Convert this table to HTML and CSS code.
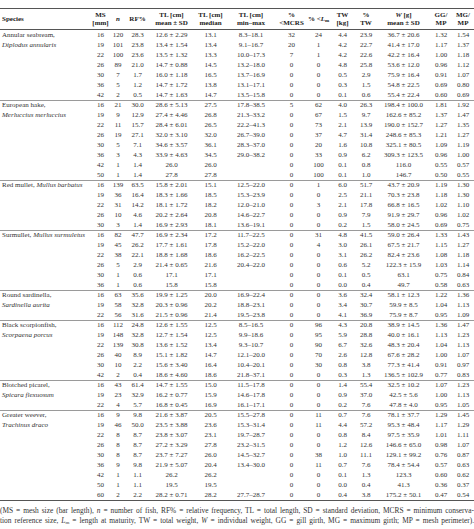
FILE: index.html
```html
<!DOCTYPE html>
<html>
<head>
<meta charset="utf-8">
<link rel="stylesheet" href="styles.css">
</head>
<body>
<div class="page">
<table class="data">
<thead>
<tr>
<th class="sp"><span>Species</span></th>
<th><span>MS<br>[mm]</span></th>
<th><span><i>n</i></span></th>
<th><span>RF%</span></th>
<th><span>TL [cm]<br>mean ± SD</span></th>
<th><span>TL [cm]<br>median</span></th>
<th><span>TL [cm]<br>min–max</span></th>
<th><span>%<br>&lt;MCRS</span></th>
<th><span>% &lt;<i>L</i><sub>m</sub></span></th>
<th><span>TW<br>[kg]</span></th>
<th><span>%<br>TW</span></th>
<th><span><i>W</i> [g]<br>mean ± SD</span></th>
<th><span>GG/<br>MP</span></th>
<th><span>MG/<br>MP</span></th>
</tr>
</thead>
<tbody>
<tr><td class="sp">Annular seabream,</td><td>16</td><td>120</td><td>28.3</td><td>12.6 ± 2.29</td><td>13.1</td><td>8.3–18.1</td><td>32</td><td>24</td><td>4.4</td><td>23.9</td><td>36.7 ± 20.6</td><td>1.32</td><td>1.54</td></tr>
<tr><td class="sp"><i>Diplodus annularis</i></td><td>19</td><td>101</td><td>23.8</td><td>13.4 ± 1.54</td><td>13.4</td><td>9.1–16.7</td><td>20</td><td>1</td><td>4.2</td><td>22.7</td><td>41.4 ± 17.0</td><td>1.17</td><td>1.37</td></tr>
<tr><td class="sp"></td><td>22</td><td>100</td><td>23.6</td><td>13.5 ± 1.32</td><td>13.3</td><td>10.0–17.3</td><td>7</td><td>1</td><td>4.2</td><td>22.6</td><td>42.2 ± 16.4</td><td>1.00</td><td>1.18</td></tr>
<tr><td class="sp"></td><td>26</td><td>89</td><td>21.0</td><td>14.7 ± 0.88</td><td>14.5</td><td>13.2–18.0</td><td>0</td><td>0</td><td>4.8</td><td>25.8</td><td>53.6 ± 12.0</td><td>0.96</td><td>1.12</td></tr>
<tr><td class="sp"></td><td>30</td><td>7</td><td>1.7</td><td>16.0 ± 1.18</td><td>16.5</td><td>13.7–16.9</td><td>0</td><td>0</td><td>0.5</td><td>2.9</td><td>75.9 ± 16.4</td><td>0.91</td><td>1.07</td></tr>
<tr><td class="sp"></td><td>36</td><td>5</td><td>1.2</td><td>14.7 ± 1.72</td><td>13.8</td><td>13.1–17.1</td><td>0</td><td>0</td><td>0.3</td><td>1.5</td><td>54.8 ± 22.5</td><td>0.69</td><td>0.80</td></tr>
<tr><td class="sp"></td><td>42</td><td>2</td><td>0.5</td><td>14.7 ± 1.63</td><td>14.7</td><td>13.5–15.8</td><td>0</td><td>0</td><td>0.1</td><td>0.6</td><td>55.4 ± 22.4</td><td>0.60</td><td>0.69</td></tr>

<tr class="g"><td class="sp">European hake,</td><td>16</td><td>21</td><td>30.0</td><td>28.6 ± 5.13</td><td>27.5</td><td>17.8–38.5</td><td>5</td><td>62</td><td>4.0</td><td>26.3</td><td>198.4 ± 100.0</td><td>1.81</td><td>1.92</td></tr>
<tr><td class="sp"><i>Merluccius merluccius</i></td><td>19</td><td>9</td><td>12.9</td><td>27.4 ± 4.46</td><td>26.8</td><td>21.3–33.2</td><td>0</td><td>67</td><td>1.5</td><td>9.7</td><td>162.6 ± 85.2</td><td>1.37</td><td>1.47</td></tr>
<tr><td class="sp"></td><td>22</td><td>11</td><td>15.7</td><td>28.4 ± 6.01</td><td>26.5</td><td>22.2–41.3</td><td>0</td><td>73</td><td>2.1</td><td>13.9</td><td>190.0 ± 152.7</td><td>1.27</td><td>1.35</td></tr>
<tr><td class="sp"></td><td>26</td><td>19</td><td>27.1</td><td>32.0 ± 3.10</td><td>32.0</td><td>26.7–39.0</td><td>0</td><td>37</td><td>4.7</td><td>31.4</td><td>248.6 ± 85.3</td><td>1.21</td><td>1.27</td></tr>
<tr><td class="sp"></td><td>30</td><td>5</td><td>7.1</td><td>34.6 ± 3.57</td><td>36.1</td><td>28.3–37.0</td><td>0</td><td>20</td><td>1.6</td><td>10.8</td><td>325.1 ± 80.5</td><td>1.09</td><td>1.19</td></tr>
<tr><td class="sp"></td><td>36</td><td>3</td><td>4.3</td><td>33.9 ± 4.63</td><td>34.5</td><td>29.0–38.2</td><td>0</td><td>33</td><td>0.9</td><td>6.2</td><td>309.3 ± 123.5</td><td>0.96</td><td>1.00</td></tr>
<tr><td class="sp"></td><td>42</td><td>1</td><td>1.4</td><td>26.0</td><td>26.0</td><td></td><td>0</td><td>100</td><td>0.1</td><td>0.8</td><td>116.0</td><td>0.55</td><td>0.57</td></tr>
<tr><td class="sp"></td><td>50</td><td>1</td><td>1.4</td><td>27.8</td><td>27.8</td><td></td><td>0</td><td>100</td><td>0.1</td><td>1.0</td><td>146.7</td><td>0.50</td><td>0.55</td></tr>

<tr class="g"><td class="sp">Red mullet, <i>Mullus barbatus</i></td><td>16</td><td>139</td><td>63.5</td><td>15.8 ± 2.01</td><td>15.1</td><td>12.5–22.0</td><td>0</td><td>1</td><td>6.0</td><td>51.7</td><td>43.7 ± 20.9</td><td>1.19</td><td>1.30</td></tr>
<tr><td class="sp"></td><td>19</td><td>36</td><td>16.4</td><td>18.3 ± 1.66</td><td>18.5</td><td>15.3–23.9</td><td>0</td><td>0</td><td>2.5</td><td>21.1</td><td>70.3 ± 23.8</td><td>1.18</td><td>1.30</td></tr>
<tr><td class="sp"></td><td>22</td><td>31</td><td>14.2</td><td>18.1 ± 1.72</td><td>18.2</td><td>12.0–21.0</td><td>0</td><td>3</td><td>2.1</td><td>17.8</td><td>66.8 ± 16.5</td><td>1.02</td><td>1.10</td></tr>
<tr><td class="sp"></td><td>26</td><td>10</td><td>4.6</td><td>20.2 ± 2.64</td><td>20.8</td><td>14.6–22.7</td><td>0</td><td>0</td><td>0.9</td><td>7.9</td><td>91.9 ± 29.7</td><td>0.96</td><td>1.02</td></tr>
<tr><td class="sp"></td><td>30</td><td>3</td><td>1.4</td><td>16.9 ± 2.93</td><td>18.1</td><td>13.6–19.1</td><td>0</td><td>0</td><td>0.2</td><td>1.5</td><td>58.0 ± 24.5</td><td>0.69</td><td>0.75</td></tr>

<tr class="g"><td class="sp">Surmullet, <i>Mullus surmuletus</i></td><td>16</td><td>82</td><td>47.7</td><td>16.9 ± 2.34</td><td>17.2</td><td>11.7–22.5</td><td>0</td><td>31</td><td>4.8</td><td>41.5</td><td>59.0 ± 26.4</td><td>1.33</td><td>1.43</td></tr>
<tr><td class="sp"></td><td>19</td><td>45</td><td>26.2</td><td>17.7 ± 1.61</td><td>17.8</td><td>15.2–22.0</td><td>0</td><td>4</td><td>3.0</td><td>26.1</td><td>67.5 ± 21.7</td><td>1.15</td><td>1.27</td></tr>
<tr><td class="sp"></td><td>22</td><td>38</td><td>22.1</td><td>18.8 ± 1.68</td><td>18.6</td><td>16.2–22.5</td><td>0</td><td>0</td><td>3.1</td><td>26.2</td><td>82.4 ± 23.6</td><td>1.08</td><td>1.18</td></tr>
<tr><td class="sp"></td><td>26</td><td>5</td><td>2.9</td><td>21.4 ± 0.65</td><td>21.6</td><td>20.4–22.0</td><td>0</td><td>0</td><td>0.6</td><td>5.2</td><td>122.3 ± 15.9</td><td>1.03</td><td>1.14</td></tr>
<tr><td class="sp"></td><td>30</td><td>1</td><td>0.6</td><td>17.1</td><td>17.1</td><td></td><td>0</td><td>0</td><td>0.1</td><td>0.5</td><td>63.1</td><td>0.75</td><td>0.84</td></tr>
<tr><td class="sp"></td><td>36</td><td>1</td><td>0.6</td><td>15.8</td><td>15.8</td><td></td><td>0</td><td>0</td><td>0.0</td><td>0.4</td><td>49.7</td><td>0.58</td><td>0.63</td></tr>

<tr class="g"><td class="sp">Round sardinella,</td><td>16</td><td>63</td><td>35.6</td><td>19.9 ± 1.25</td><td>20.0</td><td>16.9–22.4</td><td>0</td><td>0</td><td>3.6</td><td>32.4</td><td>58.1 ± 12.3</td><td>1.22</td><td>1.36</td></tr>
<tr><td class="sp"><i>Sardinella aurita</i></td><td>19</td><td>58</td><td>32.8</td><td>20.3 ± 0.96</td><td>20.2</td><td>18.8–23.1</td><td>0</td><td>0</td><td>3.4</td><td>30.7</td><td>59.9 ± 8.5</td><td>1.04</td><td>1.13</td></tr>
<tr><td class="sp"></td><td>22</td><td>56</td><td>31.6</td><td>21.5 ± 0.96</td><td>21.4</td><td>19.5–23.8</td><td>0</td><td>0</td><td>4.1</td><td>36.9</td><td>75.9 ± 8.7</td><td>0.95</td><td>1.09</td></tr>

<tr class="g"><td class="sp">Black scorpionfish,</td><td>16</td><td>112</td><td>24.8</td><td>12.6 ± 1.55</td><td>12.5</td><td>8.5–16.5</td><td>0</td><td>96</td><td>4.3</td><td>20.8</td><td>38.9 ± 14.5</td><td>1.36</td><td>1.47</td></tr>
<tr><td class="sp"><i>Scorpaena porcus</i></td><td>19</td><td>148</td><td>32.8</td><td>12.7 ± 1.54</td><td>12.5</td><td>9.9–18.6</td><td>0</td><td>95</td><td>5.9</td><td>28.8</td><td>40.0 ± 16.1</td><td>1.13</td><td>1.23</td></tr>
<tr><td class="sp"></td><td>22</td><td>139</td><td>30.8</td><td>13.6 ± 1.52</td><td>13.4</td><td>9.3–10.7</td><td>0</td><td>90</td><td>6.7</td><td>32.6</td><td>48.3 ± 20.4</td><td>1.04</td><td>1.13</td></tr>
<tr><td class="sp"></td><td>26</td><td>40</td><td>8.9</td><td>15.1 ± 1.82</td><td>14.7</td><td>12.1–20.0</td><td>0</td><td>70</td><td>2.6</td><td>12.8</td><td>67.6 ± 28.2</td><td>1.00</td><td>1.07</td></tr>
<tr><td class="sp"></td><td>30</td><td>10</td><td>2.2</td><td>15.6 ± 3.40</td><td>16.4</td><td>10.4–20.1</td><td>0</td><td>30</td><td>0.8</td><td>3.8</td><td>77.3 ± 41.4</td><td>0.91</td><td>0.97</td></tr>
<tr><td class="sp"></td><td>42</td><td>2</td><td>0.4</td><td>18.6 ± 4.60</td><td>18.6</td><td>21.8–37.1</td><td>0</td><td>0</td><td>0.3</td><td>1.3</td><td>136.5 ± 102.9</td><td>0.77</td><td>0.83</td></tr>

<tr class="g"><td class="sp">Blotched picarel,</td><td>16</td><td>43</td><td>61.4</td><td>14.7 ± 1.55</td><td>15.0</td><td>11.5–17.8</td><td>0</td><td>0</td><td>1.4</td><td>55.4</td><td>32.5 ± 10.2</td><td>1.07</td><td>1.23</td></tr>
<tr><td class="sp"><i>Spicara flexuosum</i></td><td>19</td><td>23</td><td>32.9</td><td>16.2 ± 0.77</td><td>15.9</td><td>14.6–17.8</td><td>0</td><td>0</td><td>0.9</td><td>37.0</td><td>42.5 ± 5.6</td><td>1.00</td><td>1.13</td></tr>
<tr><td class="sp"></td><td>22</td><td>4</td><td>5.7</td><td>16.8 ± 0.45</td><td>16.9</td><td>16.1–17.1</td><td>0</td><td>0</td><td>0.2</td><td>7.6</td><td>47.8 ± 4.0</td><td>0.95</td><td>1.05</td></tr>

<tr class="g"><td class="sp">Greater weever,</td><td>16</td><td>9</td><td>9.8</td><td>21.6 ± 3.87</td><td>20.5</td><td>15.5–27.8</td><td>0</td><td>11</td><td>0.7</td><td>7.6</td><td>78.1 ± 37.7</td><td>1.29</td><td>1.45</td></tr>
<tr><td class="sp"><i>Trachinus draco</i></td><td>19</td><td>46</td><td>50.0</td><td>23.5 ± 3.88</td><td>23.6</td><td>15.3–31.4</td><td>0</td><td>11</td><td>4.4</td><td>57.2</td><td>95.3 ± 48.4</td><td>1.17</td><td>1.29</td></tr>
<tr><td class="sp"></td><td>22</td><td>8</td><td>8.7</td><td>23.8 ± 3.07</td><td>23.1</td><td>19.7–28.7</td><td>0</td><td>0</td><td>0.8</td><td>8.4</td><td>97.5 ± 35.9</td><td>1.01</td><td>1.11</td></tr>
<tr><td class="sp"></td><td>26</td><td>8</td><td>8.7</td><td>27.2 ± 3.29</td><td>27.8</td><td>23.2–31.5</td><td>0</td><td>0</td><td>1.2</td><td>12.6</td><td>146.6 ± 65.0</td><td>0.98</td><td>1.07</td></tr>
<tr><td class="sp"></td><td>30</td><td>8</td><td>8.7</td><td>23.7 ± 7.27</td><td>26.0</td><td>14.5–32.7</td><td>0</td><td>38</td><td>1.0</td><td>11.1</td><td>129.1 ± 99.2</td><td>0.76</td><td>0.87</td></tr>
<tr><td class="sp"></td><td>36</td><td>9</td><td>9.8</td><td>21.9 ± 5.07</td><td>20.4</td><td>13.4–30.0</td><td>0</td><td>11</td><td>0.7</td><td>7.6</td><td>78.4 ± 54.4</td><td>0.57</td><td>0.63</td></tr>
<tr><td class="sp"></td><td>42</td><td>1</td><td>1.1</td><td>26.2</td><td>26.2</td><td></td><td>0</td><td>0</td><td>0.1</td><td>1.3</td><td>123.3</td><td>0.60</td><td>0.62</td></tr>
<tr><td class="sp"></td><td>50</td><td>1</td><td>1.1</td><td>19.5</td><td>19.5</td><td></td><td>0</td><td>0</td><td>0.0</td><td>0.4</td><td>41.3</td><td>0.36</td><td>0.37</td></tr>
<tr class="last"><td class="sp"></td><td>60</td><td>2</td><td>2.2</td><td>28.2 ± 0.71</td><td>28.2</td><td>27.7–28.7</td><td>0</td><td>0</td><td>0.4</td><td>3.8</td><td>175.2 ± 50.1</td><td>0.47</td><td>0.54</td></tr>
</tbody>
</table>
<div class="note">
<p>(MS = mesh size (bar length), <i>n</i> = number of fish, RF% = relative frequency, TL = total length, SD = standard deviation, MCRS = minimum conserva-</p>
<p>tion reference size, <i>L</i><sub>m</sub> = length at maturity, TW = total weight, <i>W</i> = individual weight, GG = gill girth, MG = maximum girth; MP = mesh perimeter).</p>
</div>
</div>
</body>
</html>
```

FILE: styles.css
```css
html, body {
  margin: 0;
  padding: 0;
  background: #fff;
}
body {
  width: 474px;
  height: 529px;
  overflow: hidden;
  font-family: "Liberation Serif", "Times New Roman", serif;
  color: #333;
}
.page {
  padding-top: 8px;
}
.data {
  display: block;
  width: 474px;
  border-collapse: separate;
  border-spacing: 0;
}
.data thead,
.data tbody {
  display: block;
}
.data tr {
  display: grid;
  grid-template-columns: 92px 17px 18px 21px 47px 31px 50px 31px 23px 25px 22px 53px 22px 22px;
}
.data thead tr {
  height: 20px;
  border-top: 1px solid #555;
  border-bottom: 1px solid #555;
}
.data th {
  display: flex;
  align-items: center;
  justify-content: center;
  font-weight: bold;
  font-size: 7px;
  line-height: 8.5px;
  padding: 0;
  color: #222;
  text-align: center;
  white-space: nowrap;
}
.data th span {
  display: block;
}
.data th.sp {
  justify-content: flex-start;
  padding-left: 2px;
}
.data sub,
.note sub {
  font-size: 5px;
  line-height: 0;
  vertical-align: -1px;
}
.data tbody tr {
  height: 10px;
}
.data td {
  display: block;
  font-size: 7px;
  line-height: 10px;
  height: 10px;
  padding: 0;
  text-align: center;
  white-space: nowrap;
}
.data td.sp {
  text-align: left;
  padding-left: 2px;
}
.data tr.g {
  box-shadow: inset 0 1px 0 #9a9a9a;
}
.data tr.last {
  border-bottom: 1px solid #555;
}
.note {
  margin-top: 5px;
  font-size: 7.4px;
  line-height: 10px;
  color: #333;
}
.note p {
  margin: 0;
  text-align: justify;
  text-align-last: justify;
  white-space: nowrap;
}
```
